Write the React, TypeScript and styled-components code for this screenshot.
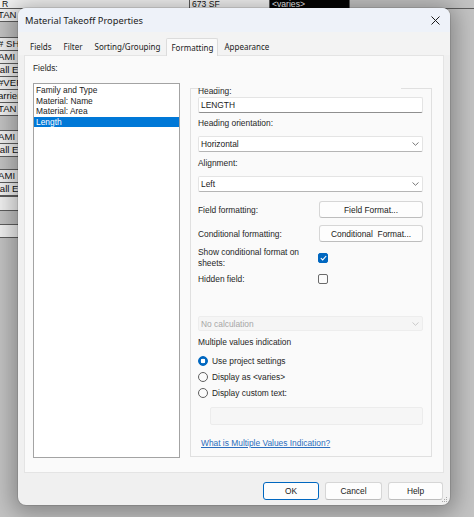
import React from 'react';
import styled, { createGlobalStyle } from 'styled-components';

const UI_FONT = `"Liberation Sans", Arial, sans-serif`;
const CHROME_FONT = `"Noto Sans", "Open Sans", sans-serif`;

const GlobalStyle = createGlobalStyle`
  html, body { margin: 0; padding: 0; }
  body { width: 474px; height: 517px; overflow: hidden; background: #c3c3c3; }
  * { box-sizing: border-box; }
`;

const Screen = styled.div`
  position: relative;
  width: 474px;
  height: 517px;
  overflow: hidden;
  background: #c3c3c3;
  font-family: ${UI_FONT};
`;

/* spreadsheet peeking out behind the dialog */
const Sheet = styled.div`
  display: flex;
  flex-direction: column;
  font-size: 9.6px;
  color: #111;
`;

const SheetTop = styled.div`
  display: flex;
  height: 9px;
  border-bottom: 1px solid #5c5c5c;
  font-size: 8.6px;
`;

const TopCell = styled.div<{ $w?: number; $tone: 'light' | 'dark' | 'empty' }>`
  flex: ${p => (p.$w ? `0 0 ${p.$w}px` : '1')};
  height: 8px;
  line-height: 8px;
  padding-left: 2px;
  overflow: hidden;
  white-space: nowrap;
  background: ${p => (p.$tone === 'dark' ? '#050505' : p.$tone === 'light' ? '#f3f3f3' : '#c3c3c3')};
  color: ${p => (p.$tone === 'dark' ? '#f0f0f0' : '#111')};
  border-right: ${p => (p.$tone === 'empty' ? 'none' : '1px solid #5c5c5c')};
`;

const SheetRow = styled.div<{ $h: number; $gap?: boolean }>`
  width: 60px;
  height: ${p => p.$h}px;
  line-height: ${p => p.$h - 1}px;
  background: ${p => (p.$gap ? '#c3c3c3' : '#f1f1f1')};
  border-bottom: 1px solid #5e5e5e;
  white-space: nowrap;
  overflow: hidden;
  text-indent: -2px;
`;

/* dialog chrome */
const Dialog = styled.div`
  position: absolute;
  left: 18px;
  top: 8px;
  width: 432px;
  height: 497px;
  display: flex;
  flex-direction: column;
  background: #f0f0f0;
  border-radius: 8px;
  overflow: hidden;
  box-shadow: 0 0 0 1px rgba(0, 0, 0, 0.1), 0 3px 22px 6px rgba(0, 0, 0, 0.3);
`;

const TitleBar = styled.div`
  flex: 0 0 24px;
  display: flex;
  align-items: center;
  justify-content: space-between;
  padding: 1px 10px 0 7px;
  background: #eef2f9;
  font-family: ${CHROME_FONT};
  font-size: 9.3px;
  color: #1b1b1b;
`;

const TabStrip = styled.div`
  flex: 0 0 23px;
  display: flex;
  align-items: flex-end;
  padding-left: 6px;
  background: #f3f3f3;
`;

const Tab = styled.div<{ $active?: boolean }>`
  position: relative;
  height: 18px;
  display: flex;
  align-items: center;
  padding: 0 ${p => (p.$active ? 4 : 5)}px;
  margin-bottom: ${p => (p.$active ? -1 : 0)}px;
  font-family: ${CHROME_FONT};
  font-size: 8px;
  color: #1b1b1b;
  background: ${p => (p.$active ? '#fafafa' : 'transparent')};
  border: 1px solid ${p => (p.$active ? '#dcdcdc' : 'transparent')};
  border-bottom: none;
  border-radius: 2px 2px 0 0;
`;

const Body = styled.div`
  flex: 1;
  display: flex;
  flex-direction: column;
  padding: 0 6px;
`;

const Panel = styled.div`
  flex: 0 0 418px;
  display: grid;
  grid-template-columns: 147px 242px;
  column-gap: 10px;
  align-items: start;
  padding: 7px 0 0 8px;
  background: #fafafa;
  border: 1px solid #e4e4e4;
`;

const Column = styled.div`
  display: flex;
  flex-direction: column;
`;

const Label = styled.div<{ $mt?: number; $lh?: number }>`
  margin-top: ${p => p.$mt ?? 0}px;
  font-size: 8.4px;
  line-height: ${p => p.$lh ?? 10}px;
  color: #1f1f1f;
  white-space: pre;
`;

const FieldList = styled.div`
  margin-top: 10px;
  height: 375px;
  padding-top: 1px;
  background: #fff;
  border: 1px solid #a3a3a3;
`;

const FieldItem = styled.div<{ $selected?: boolean }>`
  height: 10.5px;
  line-height: 10.5px;
  padding-left: 2px;
  font-size: 8.4px;
  background: ${p => (p.$selected ? '#0078d7' : 'transparent')};
  color: ${p => (p.$selected ? '#fff' : '#1a1a1a')};
`;

const Group = styled.div`
  position: relative;
  margin-top: 25px;
  height: 369px;
  display: flex;
  flex-direction: column;
  padding: 0 8px 0 7px;
  border: 1px solid #e0e0e0;

  &::before {
    content: '';
    position: absolute;
    top: -1px;
    left: 17px;
    right: 30px;
    height: 1px;
    background: #fafafa;
  }
`;

const TextBox = styled.div<{ $mt: number; $h: number; $disabled?: boolean; $indent?: number }>`
  margin-top: ${p => p.$mt}px;
  margin-left: ${p => p.$indent ?? 0}px;
  height: ${p => p.$h}px;
  line-height: ${p => p.$h - 2}px;
  padding: 0 2px;
  font-size: 8.4px;
  color: #1a1a1a;
  background: ${p => (p.$disabled ? '#f6f6f6' : '#fff')};
  border: 1px solid ${p => (p.$disabled ? '#ececec' : '#e4e4e4')};
  border-bottom-color: ${p => (p.$disabled ? '#ececec' : '#8f8f8f')};
  border-radius: 2px;
`;

const Select = styled.div<{ $mt: number; $h?: number; $disabled?: boolean }>`
  margin-top: ${p => p.$mt}px;
  height: ${p => p.$h ?? 16}px;
  display: flex;
  align-items: center;
  justify-content: space-between;
  padding: 0 3px 0 2px;
  font-size: 8.4px;
  color: ${p => (p.$disabled ? '#a6a6a6' : '#1a1a1a')};
  background: ${p => (p.$disabled ? '#f5f5f5' : '#fff')};
  border: 1px solid ${p => (p.$disabled ? '#ededed' : '#e4e4e4')};
  border-bottom-color: ${p => (p.$disabled ? '#ededed' : '#b5b5b5')};
  border-radius: 2px;

  svg {
    stroke: ${p => (p.$disabled ? '#c4c4c4' : '#6a6a6a')};
  }
`;

const FormatRow = styled.div<{ $mt: number; $h: number }>`
  display: grid;
  grid-template-columns: 121px 1fr;
  align-items: center;
  margin-top: ${p => p.$mt}px;
  height: ${p => p.$h}px;
`;

const PushButton = styled.div<{ $w?: number; $default?: boolean }>`
  width: ${p => (p.$w ? `${p.$w}px` : 'auto')};
  height: 100%;
  display: flex;
  align-items: center;
  justify-content: center;
  font-size: 8.4px;
  color: #1a1a1a;
  white-space: pre;
  background: #fdfdfd;
  border: 1px solid ${p => (p.$default ? '#0067c0' : '#d6d6d6')};
  border-bottom-color: ${p => (p.$default ? '#0067c0' : '#bdbdbd')};
  border-radius: 3px;
`;

const CheckBox = styled.div<{ $checked?: boolean }>`
  width: 10px;
  height: 10px;
  margin-left: -1px;
  display: flex;
  align-items: center;
  justify-content: center;
  border-radius: 2px;
  background: ${p => (p.$checked ? '#0067c0' : '#fbfbfb')};
  border: 1px solid ${p => (p.$checked ? '#0067c0' : '#6a6a6a')};
`;

const RadioRow = styled.div<{ $mt?: number }>`
  margin-top: ${p => p.$mt ?? 0}px;
  height: 16px;
  display: flex;
  align-items: center;
  gap: 4px;
  font-size: 8.4px;
  color: #1f1f1f;
`;

const RadioDot = styled.div<{ $on?: boolean }>`
  width: 10px;
  height: 10px;
  border-radius: 50%;
  background: ${p => (p.$on ? 'radial-gradient(circle, #fff 0 2.1px, #0067c0 2.6px)' : '#fbfbfb')};
  border: 1px solid ${p => (p.$on ? '#0067c0' : '#5f5f5f')};
`;

const HelpLink = styled.a`
  margin: 13px 0 0 3px;
  font-size: 8.4px;
  line-height: 10px;
  color: #2b6dbd;
  text-decoration: underline;
  cursor: pointer;
`;

const Footer = styled.div`
  flex: 1;
  display: flex;
  justify-content: flex-end;
  align-items: flex-start;
  gap: 6px;
  padding: 9px 1px 0 0;

  ${PushButton} {
    height: 18px;
  }
`;

const Grip = styled.svg`
  position: absolute;
  right: 2px;
  bottom: 2px;
`;

const Chevron = () => (
  <svg width="7" height="4" viewBox="0 0 7 4" fill="none" strokeWidth="0.9">
    <path d="M0.5 0.5 L3.5 3.3 L6.5 0.5" />
  </svg>
);

const sheetRows: { h: number; text?: string; gap?: boolean }[] = [
  { h: 13, text: 'TAN' },
  { h: 16, gap: true },
  { h: 13, text: '# SH' },
  { h: 13, text: 'AMI' },
  { h: 13, text: "'all E" },
  { h: 13, text: '#VER' },
  { h: 13, text: 'arrier' },
  { h: 13, text: 'TAN' },
  { h: 15, gap: true },
  { h: 13, text: 'AMI' },
  { h: 13, text: "'all E" },
  { h: 13, gap: true },
  { h: 13, text: 'AMI' },
  { h: 13, text: "'all E" },
  { h: 1, gap: true },
  { h: 14 },
  { h: 14, gap: true },
  { h: 13 },
];

const tabs = ['Fields', 'Filter', 'Sorting/Grouping', 'Formatting', 'Appearance'];
const fields = ['Family and Type', 'Material: Name', 'Material: Area', 'Length'];

const App: React.FC = () => {
  return (
    <Screen>
      <GlobalStyle />
      <Sheet>
        <SheetTop>
          <TopCell $w={190} $tone="light">R</TopCell>
          <TopCell $w={80} $tone="light">673 SF</TopCell>
          <TopCell $w={80} $tone="dark">&lt;varies&gt;</TopCell>
          <TopCell $tone="empty" />
        </SheetTop>
        {sheetRows.map((row, i) => (
          <SheetRow key={i} $h={row.h} $gap={row.gap}>
            {row.text}
          </SheetRow>
        ))}
      </Sheet>

      <Dialog>
        <TitleBar>
          <span>Material Takeoff Properties</span>
          <svg width="9" height="9" viewBox="0 0 9 9" stroke="#1b1b1b" strokeWidth="1">
            <path d="M0.5 0.5 L8.5 8.5 M8.5 0.5 L0.5 8.5" />
          </svg>
        </TitleBar>

        <TabStrip>
          {tabs.map(t => (
            <Tab key={t} $active={t === 'Formatting'}>
              {t}
            </Tab>
          ))}
        </TabStrip>

        <Body>
          <Panel>
            <Column>
              <Label>Fields:</Label>
              <FieldList>
                {fields.map(f => (
                  <FieldItem key={f} $selected={f === 'Length'}>
                    {f}
                  </FieldItem>
                ))}
              </FieldList>
            </Column>

            <Group>
              <Label $mt={-3}>Heading:</Label>
              <TextBox $mt={1} $h={16}>LENGTH</TextBox>

              <Label $mt={5}>Heading orientation:</Label>
              <Select $mt={8}>
                <span>Horizontal</span>
                <Chevron />
              </Select>

              <Label $mt={6}>Alignment:</Label>
              <Select $mt={8}>
                <span>Left</span>
                <Chevron />
              </Select>

              <FormatRow $mt={9} $h={17}>
                <Label>Field formatting:</Label>
                <PushButton>Field Format...</PushButton>
              </FormatRow>
              <FormatRow $mt={7} $h={17}>
                <Label>Conditional formatting:</Label>
                <PushButton>Conditional  Format...</PushButton>
              </FormatRow>
              <FormatRow $mt={5} $h={22}>
                <Label $lh={11}>{'Show conditional format on\nsheets:'}</Label>
                <CheckBox $checked>
                  <svg width="7" height="6" viewBox="0 0 7 6" fill="none" stroke="#fff" strokeWidth="1.1">
                    <path d="M0.8 3.1 L2.7 4.9 L6.2 1" />
                  </svg>
                </CheckBox>
              </FormatRow>
              <FormatRow $mt={4} $h={11}>
                <Label>Hidden field:</Label>
                <CheckBox />
              </FormatRow>

              <Select $mt={32} $h={15} $disabled>
                <span>No calculation</span>
                <Chevron />
              </Select>

              <Label $mt={6}>Multiple values indication</Label>
              <RadioRow $mt={6}>
                <RadioDot $on />
                Use project settings
              </RadioRow>
              <RadioRow>
                <RadioDot />
                Display as &lt;varies&gt;
              </RadioRow>
              <RadioRow>
                <RadioDot />
                Display custom text:
              </RadioRow>
              <TextBox $mt={6} $h={18} $indent={12} $disabled />

              <HelpLink>What is Multiple Values Indication?</HelpLink>
            </Group>
          </Panel>

          <Footer>
            <PushButton $w={56} $default>OK</PushButton>
            <PushButton $w={57}>Cancel</PushButton>
            <PushButton $w={55}>Help</PushButton>
          </Footer>
        </Body>

        <Grip width="6" height="6" viewBox="0 0 6 6" fill="#a8a8a8">
          <rect x="4" y="0" width="1" height="1" />
          <rect x="2" y="2" width="1" height="1" />
          <rect x="4" y="2" width="1" height="1" />
          <rect x="0" y="4" width="1" height="1" />
          <rect x="2" y="4" width="1" height="1" />
          <rect x="4" y="4" width="1" height="1" />
        </Grip>
      </Dialog>
    </Screen>
  );
};

export default App;
